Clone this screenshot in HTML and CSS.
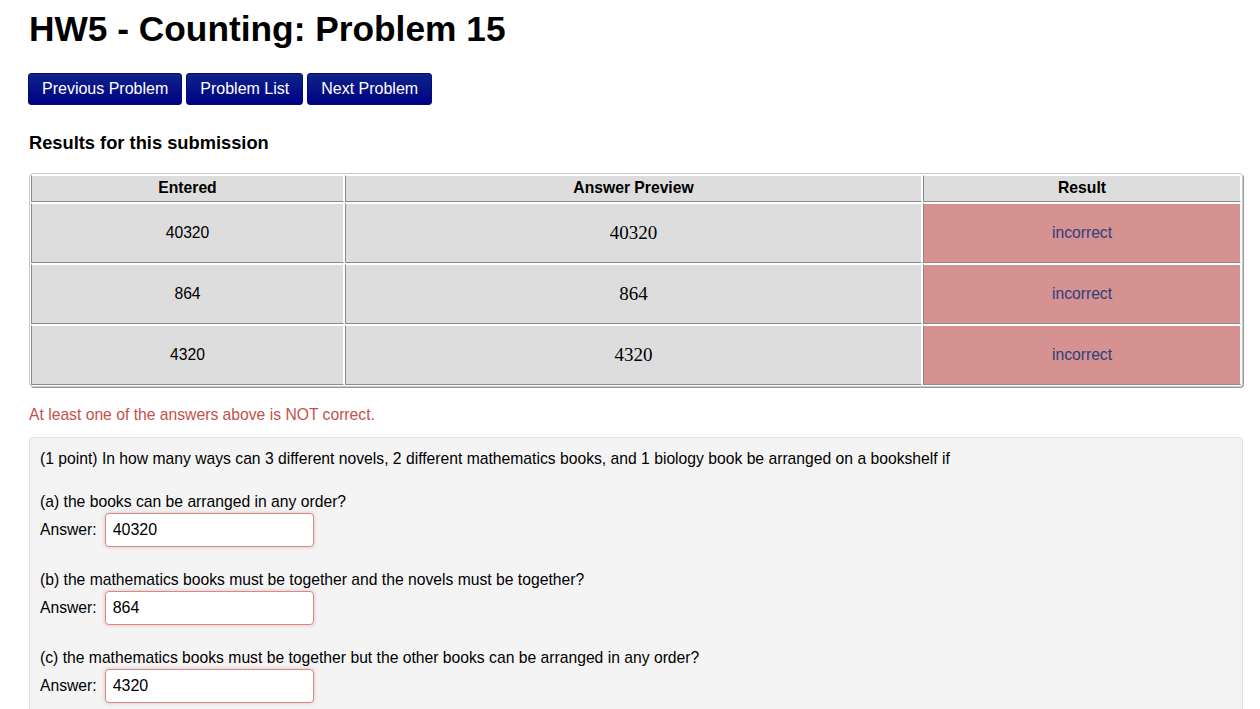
FILE: index.html
```html
<!DOCTYPE html>
<html lang="en">

<head>
    <meta charset="UTF-8">
    <meta name="viewport" content="width=device-width, initial-scale=1.0">
    <title>HW5 - Counting: Problem 15</title>
    <link rel="stylesheet" href="styles.css">
</head>

<body>

    <div class="page">
        <h1 class="title">HW5 - Counting: Problem 15</h1>

        <div class="nav">
            <a class="btn" href="#">Previous Problem</a>
            <a class="btn" href="#">Problem List</a>
            <a class="btn" href="#">Next Problem</a>
        </div>

        <h3 class="results-title">Results for this submission</h3>

        <table class="attempt-results">
            <tr>
                <th class="col-entered">Entered</th>
                <th class="col-preview">Answer Preview</th>
                <th class="col-result">Result</th>
            </tr>
            <tr>
                <td>40320</td>
                <td class="preview">40320</td>
                <td class="incorrect">incorrect</td>
            </tr>
            <tr>
                <td>864</td>
                <td class="preview">864</td>
                <td class="incorrect">incorrect</td>
            </tr>
            <tr>
                <td>4320</td>
                <td class="preview">4320</td>
                <td class="incorrect">incorrect</td>
            </tr>
        </table>

        <div class="message">At least one of the answers above is NOT correct.</div>

        <!-- problem body -->
        <div class="problem">
            <div class="intro">(1 point) In how many ways can 3 different novels, 2 different mathematics books, and 1 biology book be arranged on a bookshelf if</div>

            <div class="part">
                <div class="question">(a) the books can be arranged in any order?</div>
                <div class="answer-row">
                    <span class="label">Answer:</span>
                    <input class="answer" type="text" value="40320">
                </div>
            </div>

            <div class="part">
                <div class="question">(b) the mathematics books must be together and the novels must be together?</div>
                <div class="answer-row">
                    <span class="label">Answer:</span>
                    <input class="answer" type="text" value="864">
                </div>
            </div>

            <div class="part">
                <div class="question">(c) the mathematics books must be together but the other books can be arranged in any order?</div>
                <div class="answer-row">
                    <span class="label">Answer:</span>
                    <input class="answer" type="text" value="4320">
                </div>
            </div>
        </div>
    </div>

</body>

</html>
```

FILE: styles.css
```css
* {
    margin: 0;
    padding: 0;
    box-sizing: border-box;
}

body {
    background: white;
    color: black;
    font-family: "Liberation Sans", Arial, sans-serif;
    font-size: 15.7px;
}

.page {
    padding: 0 17px 0 29px;
}

.title {
    font-size: 35.3px;
    font-weight: bold;
    line-height: 40px;
    padding-top: 9px;
}

.nav {
    display: flex;
    gap: 4px;
    margin-top: 24px;
    margin-left: -1px;
}

.btn {
    display: inline-block;
    height: 32px;
    line-height: 30px;
    padding: 0 13px;
    color: white;
    text-decoration: none;
    font-size: 16px;
    background: linear-gradient(#0f2488, #000086);
    border: 1px solid #00106a;
    border-radius: 3px;
}

.results-title {
    font-size: 18.3px;
    font-weight: bold;
    line-height: 22px;
    margin-top: 27px;
}

.attempt-results {
    width: 100%;
    margin-top: 19px;
    border-collapse: separate;
    border-spacing: 1px;
    border: 1px solid #c8c8c8;
    border-radius: 4px;
    box-shadow: 1px 1px 0 #999;
    font-size: 15.7px;
}

.attempt-results th,
.attempt-results td {
    background-color: #dddddd;
    text-align: center;
    border: 1px solid white;
    border-left-color: #8a8a8a;
    border-bottom-color: #8a8a8a;
}

.attempt-results th {
    height: 27px;
    font-weight: bold;
    padding-bottom: 1px;
}

.attempt-results td {
    height: 60px;
}

.col-entered {
    width: 313px;
}

.col-result {
    width: 318px;
}

.attempt-results .preview {
    font-family: "Liberation Serif", "Times New Roman", serif;
    font-size: 19px;
}

.attempt-results .incorrect {
    background-color: #d69191;
    color: #2c3f7c;
}

.message {
    color: #c5504c;
    line-height: 20px;
    margin-top: 18px;
}

.problem {
    margin-top: 12px;
    background-color: #f4f4f4;
    border: 1px solid #e3e3e3;
    border-radius: 4px;
    padding: 11px 10px 10px 10px;
    line-height: 20px;
    min-height: 300px;
}

.part {
    margin-top: 23px;
}

.answer-row {
    display: flex;
    align-items: center;
    gap: 8px;
    margin-top: 1px;
}

.answer {
    width: 209px;
    height: 34px;
    padding: 0 7px;
    font-family: "Liberation Sans", Arial, sans-serif;
    font-size: 16px;
    color: black;
    background: white;
    border: 1px solid #d58a8a;
    border-radius: 4px;
    box-shadow: 0 0 4px rgba(200, 80, 80, 0.35);
    outline: none;
}
```
